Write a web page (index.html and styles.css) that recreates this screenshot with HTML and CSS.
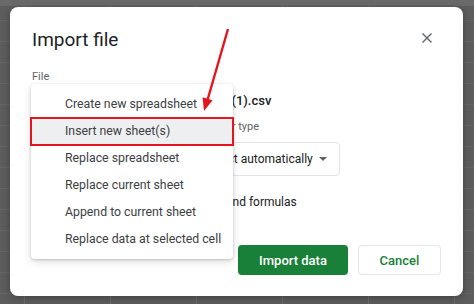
FILE: index.html
```html
<!DOCTYPE html>
<html lang="en">
<head>
    <meta charset="UTF-8">
    <meta name="viewport" content="width=device-width, initial-scale=1.0">
    <title>Import file</title>
    <link rel="stylesheet" href="styles.css">
</head>
<body>
    <div class="sheet-bg">
        <div class="dialog">
            <div class="dialog-header">
                <h1>Import file</h1>
                <button class="close-btn" aria-label="Close">
                    <svg width="10" height="10" viewBox="0 0 10 10">
                        <path d="M0.5 0.5 L9.5 9.5 M9.5 0.5 L0.5 9.5" stroke="#5f6368" stroke-width="1.4" fill="none"/>
                    </svg>
                </button>
            </div>

            <div class="dialog-body">
                <div class="field-label">File</div>
                <div class="file-name">Quarterly_sale_data_export_2023_(1).csv</div>

                <div class="fields">
                    <div class="field">
                        <div class="field-label">Import location</div>
                        <div class="select">
                            <span>Insert new sheet(s)</span>
                            <span class="caret"></span>
                        </div>
                    </div>
                    <div class="field">
                        <div class="field-label">Separator type</div>
                        <div class="select">
                            <span>Detect automatically</span>
                            <span class="caret"></span>
                        </div>
                    </div>
                </div>

                <div class="check-row">
                    <span class="checkbox"></span>
                    <span>Convert text to numbers, dates, and formulas</span>
                </div>
            </div>

            <div class="dialog-footer">
                <button class="btn btn-primary">Import data</button>
                <button class="btn btn-secondary">Cancel</button>
            </div>

            <ul class="menu">
                <li>Create new spreadsheet</li>
                <li class="active">Insert new sheet(s)</li>
                <li>Replace spreadsheet</li>
                <li>Replace current sheet</li>
                <li>Append to current sheet</li>
                <li>Replace data at selected cell</li>
            </ul>
        </div>
    </div>

    <svg class="arrow" width="474" height="304" viewBox="0 0 474 304">
        <line x1="228" y1="29" x2="207.5" y2="100" stroke="#e3161d" stroke-width="2.4"/>
        <polygon points="204,111 212.6,100.2 202.6,97.2" fill="#e3161d"/>
    </svg>
</body>
</html>
```

FILE: styles.css
```css
* {
    margin: 0;
    padding: 0;
    box-sizing: border-box;
}

body {
    font-family: Roboto, 'Liberation Sans', sans-serif;
    color: #3c4043;
    width: 474px;
    height: 304px;
    overflow: hidden;
    position: relative;
}

.sheet-bg {
    width: 474px;
    height: 304px;
    padding: 7px 11px 8px 10px;
    background-color: #5d5d5d;
    background-image:
        linear-gradient(to bottom, #6a6a6a 0, #6a6a6a 6px, transparent 6px),
        repeating-linear-gradient(to right, transparent 0, transparent 24px, #6e6e6e 24px, #6e6e6e 25px, transparent 25px, transparent 86px),
        repeating-linear-gradient(to bottom, transparent 0, transparent 20px, #666 20px, #666 21px);
}

.dialog {
    position: relative;
    height: 289px;
    background: #fff;
    border-radius: 8px;
    padding: 19px 22px 21px 22px;
    display: flex;
    flex-direction: column;
    box-shadow: 0 2px 8px rgba(0,0,0,0.3);
}

.dialog-header {
    display: flex;
    justify-content: space-between;
    align-items: center;
    height: 28px;
}

h1 {
    font-size: 19px;
    font-weight: 400;
    color: #202124;
    line-height: 28px;
}

.close-btn {
    background: none;
    border: none;
    width: 10px;
    height: 10px;
    margin-right: 9px;
    margin-top: -4px;
    display: flex;
}

.dialog-body {
    flex: 1;
    padding-top: 16px;
}

.field-label {
    font-size: 11px;
    color: #5f6368;
    line-height: 14px;
}

.file-name {
    font-size: 13px;
    font-weight: 500;
    color: #202124;
    line-height: 16px;
    margin-top: 9px;
    white-space: nowrap;
}

.fields {
    display: grid;
    grid-template-columns: 148px 152px;
    column-gap: 8px;
    margin-top: 11px;
}

.field .field-label {
    margin-bottom: 8px;
}

.select {
    height: 34px;
    border: 1px solid #e3e4e6;
    border-radius: 4px;
    display: flex;
    align-items: center;
    justify-content: space-between;
    padding: 0 12px 0 14px;
    font-size: 12px;
    color: #202124;
    white-space: nowrap;
}

.caret {
    width: 0;
    height: 0;
    border-left: 4px solid transparent;
    border-right: 4px solid transparent;
    border-top: 4px solid #5f6368;
}

.check-row {
    display: flex;
    align-items: center;
    gap: 11px;
    margin-top: 19px;
    font-size: 12px;
    color: #202124;
    white-space: nowrap;
}

.checkbox {
    width: 14px;
    height: 14px;
    border: 2px solid #5f6368;
    border-radius: 2px;
}

.dialog-footer {
    display: flex;
    justify-content: flex-end;
    gap: 10px;
}

.btn {
    height: 30px;
    border-radius: 4px;
    font-family: Roboto, 'Liberation Sans', sans-serif;
    font-size: 13px;
    font-weight: 500;
}

.btn-primary {
    width: 110px;
    background: #188038;
    border: none;
    color: #fff;
}

.btn-secondary {
    width: 83px;
    background: #fff;
    border: 1px solid #e3e4e6;
    color: #188038;
}

.menu {
    position: absolute;
    left: 21px;
    top: 77px;
    width: 202px;
    list-style: none;
    background: #fff;
    border-radius: 4px;
    padding: 7px 0 6px;
    box-shadow: 0 1px 3px rgba(0,0,0,0.18), 0 3px 8px rgba(0,0,0,0.12);
}

.menu li {
    height: 27px;
    line-height: 27px;
    padding-left: 34px;
    font-size: 12.3px;
    color: #3c4043;
    white-space: nowrap;
}

.menu li.active {
    background: #eeeff1;
    outline: 2px solid #e3161d;
    outline-offset: -1px;
}

.arrow {
    position: absolute;
    top: 0;
    left: 0;
    pointer-events: none;
}
```
